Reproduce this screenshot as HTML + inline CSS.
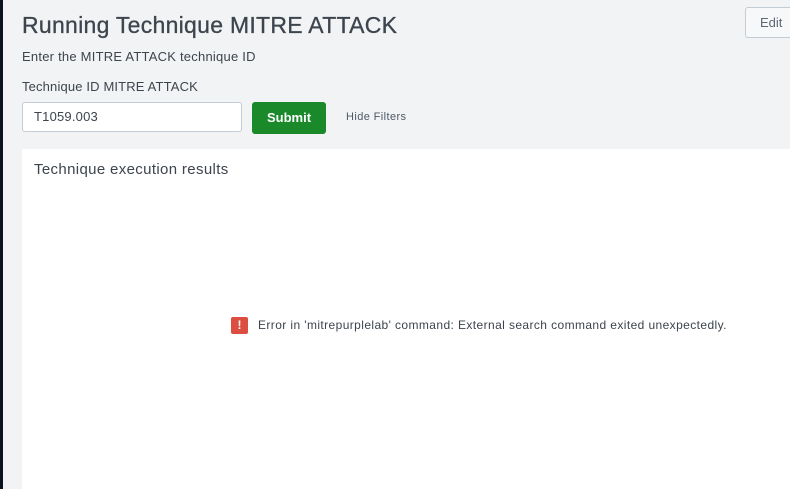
<!DOCTYPE html>
<html><head><meta charset="utf-8"><style>
html,body{margin:0;padding:0;width:790px;height:489px;overflow:hidden;background:#f2f3f5;font-family:"Liberation Sans",sans-serif;color:#3c444d}
.strip{position:absolute;left:0;top:0;width:3px;height:489px;background:#0b1320}
h1{position:absolute;left:22px;top:12px;margin:0;font-size:23px;font-weight:normal;color:#3c444d;letter-spacing:0.28px;-webkit-text-stroke:0.3px #3c444d}
.sub{position:absolute;left:22px;top:49px;font-size:13px;letter-spacing:0.23px}
.lbl{position:absolute;left:22px;top:79px;font-size:13px;letter-spacing:0.15px}
.inp{position:absolute;left:22px;top:102px;height:30px;border:1px solid #c3cbd4;border-radius:3px;background:#fff;box-sizing:border-box;width:220px;font-size:13px;line-height:28px;padding-left:11px;color:#3c444d;letter-spacing:0.2px}
.btn{position:absolute;left:252px;top:102px;width:74px;height:32px;background:#1a8929;border-radius:3px;color:#fff;font-weight:bold;font-size:13px;text-align:center;line-height:32px}
.hide{position:absolute;left:346px;top:111px;font-size:11px;color:#4d5965;letter-spacing:0.4px}
.edit{position:absolute;left:745px;top:7px;width:60px;height:31px;border:1px solid #c3cbd4;border-radius:3px;background:#f7f8fa;box-sizing:border-box;font-size:13px;line-height:29px;padding-left:14px;color:#5c6773}
.panel{position:absolute;left:22px;top:149px;width:768px;height:340px;background:#fff}
.ptitle{position:absolute;left:12px;top:12px;font-size:15px;color:#3c444d;letter-spacing:0.35px}
.err{position:absolute;left:209px;top:168px;font-size:12px;color:#3c444d;line-height:16px;letter-spacing:0.4px}
.ic{display:inline-block;width:17px;height:17px;background:#dc4e41;border-radius:2px;color:#fff;font-weight:bold;font-size:12px;text-align:center;line-height:17px;vertical-align:middle;margin-right:10px;letter-spacing:0}
</style></head><body>
<div class="strip"></div>
<h1>Running Technique MITRE ATTACK</h1>
<div class="sub">Enter the MITRE ATTACK technique ID</div>
<div class="lbl">Technique ID MITRE ATTACK</div>
<div class="inp">T1059.003</div>
<div class="btn">Submit</div>
<div class="hide">Hide Filters</div>
<div class="edit">Edit</div>
<div class="panel">
<div class="ptitle">Technique execution results</div>
<div class="err"><span class="ic">!</span>Error in 'mitrepurplelab' command: External search command exited unexpectedly.</div>
</div>
</body></html>
